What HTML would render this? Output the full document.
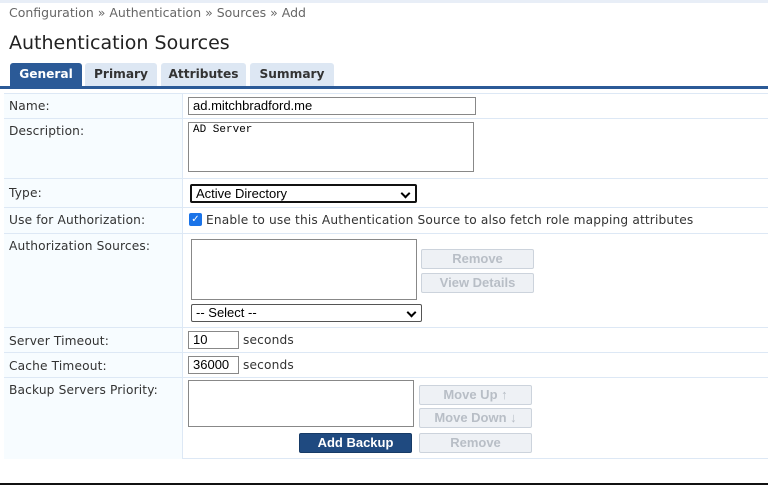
<!DOCTYPE html>
<html><head><style>
*{box-sizing:border-box;margin:0;padding:0}
body{width:768px;height:485px;background:#fff;font-family:"DejaVu Sans",Verdana,sans-serif;position:relative;overflow:hidden;color:#333}
.a{position:absolute}
.top{left:0;top:0;width:768px;height:3px;background:#e8eef7}
.bc{left:9px;top:5px;font-size:12.5px;color:#666}
h1{position:absolute;left:9px;top:32px;font-size:19px;font-weight:normal;color:#222}
.tab{position:absolute;top:63px;height:24px;background:#dde7f3;font-size:12.2px;font-weight:bold;color:#333;text-align:center;line-height:23px;border-radius:3px 3px 0 0}
.bar{left:0;top:86px;width:768px;height:3px;background:#2b5a97}
.row{position:absolute;left:4px;width:764px;border-top:1px solid #dde8f5}
.lab{position:absolute;left:4px;width:179px;background:#f7fcff;border-right:1px solid #dde8f5;font-size:12.2px;letter-spacing:0.15px;color:#333;padding:5px 0 0 5px;border-top:1px solid #dde8f5}
.frame{left:4px;top:93px;width:764px;height:366px;border:1px solid #dde8f5;border-right:none}
.inp{position:absolute;background:#fff;border:1px solid #888;font-size:13px;font-family:"Liberation Sans",Arial,sans-serif;color:#000;padding:1px 4px}
.sel{position:absolute;background:#fff;border:1px solid #555;border-radius:2px;font-size:13px;font-family:"Liberation Sans",Arial,sans-serif;color:#000;padding:0 4px}
.sel:after{content:"";position:absolute;right:6px;top:4px;width:5px;height:5px;border-right:2px solid #000;border-bottom:2px solid #000;transform:rotate(45deg)}
.btn{position:absolute;background:#eef1f5;border:1px solid #ccd3dc;border-radius:2px;font-family:"Liberation Sans",Arial,sans-serif;font-weight:bold;font-size:13px;color:#b8bec6;text-align:center;line-height:17px}
.t{position:absolute;font-size:12.2px;letter-spacing:0.15px;color:#333}
</style></head><body>
<div class="a top"></div>
<div class="a bc">Configuration » Authentication » Sources » Add</div>
<h1>Authentication Sources</h1>
<div class="tab" style="left:10px;width:72px;background:#2b5a97;color:#fff">General</div>
<div class="tab" style="left:85px;width:72px">Primary</div>
<div class="tab" style="left:161px;width:85px">Attributes</div>
<div class="tab" style="left:250px;width:84px">Summary</div>
<div class="a bar"></div>
<div class="a frame"></div>
<div class="lab" style="top:93px;height:25px">Name:</div>
<div class="lab" style="top:118px;height:60px">Description:</div>
<div class="lab" style="top:178px;height:29px;padding-top:7px">Type:</div>
<div class="lab" style="top:207px;height:26px">Use for Authorization:</div>
<div class="lab" style="top:233px;height:94px">Authorization Sources:</div>
<div class="lab" style="top:327px;height:25px;padding-top:6px">Server Timeout:</div>
<div class="lab" style="top:352px;height:25px;padding-top:6px">Cache Timeout:</div>
<div class="lab" style="top:377px;height:82px">Backup Servers Priority:</div>
<div class="row" style="top:118px"></div><div class="row" style="top:178px"></div><div class="row" style="top:207px"></div><div class="row" style="top:233px"></div><div class="row" style="top:327px"></div><div class="row" style="top:352px"></div><div class="row" style="top:377px"></div>
<div class="inp" style="left:188px;top:97px;width:288px;height:18px;padding-top:0">ad.mitchbradford.me</div>
<div class="inp" style="left:188px;top:122px;width:286px;height:50px;font-family:'Liberation Mono',monospace;font-size:11px">AD Server</div>
<div class="sel" style="left:190px;top:184px;width:227px;height:19px;border:2px solid #111">Active Directory</div>
<div class="a" style="left:189px;top:213px;width:13px;height:13px;background:#1a73e8;border-radius:2px;color:#fff;font-size:10px;line-height:13px;text-align:center">✓</div>
<div class="t" style="left:206px;top:213px">Enable to use this Authentication Source to also fetch role mapping attributes</div>
<div class="inp" style="left:191px;top:239px;width:226px;height:61px"></div>
<div class="btn" style="left:421px;top:249px;width:113px;height:20px">Remove</div>
<div class="btn" style="left:421px;top:273px;width:113px;height:20px">View Details</div>
<div class="sel" style="left:191px;top:304px;width:231px;height:18px">-- Select --</div>
<div class="inp" style="left:188px;top:331px;width:51px;height:18px;padding-top:0">10</div>
<div class="t" style="left:243px;top:333px">seconds</div>
<div class="inp" style="left:188px;top:356px;width:51px;height:18px;padding-top:0">36000</div>
<div class="t" style="left:243px;top:358px">seconds</div>
<div class="inp" style="left:188px;top:380px;width:226px;height:47px"></div>
<div class="btn" style="left:419px;top:385px;width:113px;height:20px">Move Up ↑</div>
<div class="btn" style="left:419px;top:408px;width:113px;height:20px">Move Down ↓</div>
<div class="btn" style="left:299px;top:433px;width:113px;height:20px;background:#1f4a80;border-color:#163a66;color:#fff">Add Backup</div>
<div class="btn" style="left:419px;top:433px;width:113px;height:20px">Remove</div>
<div class="a" style="left:0;top:483px;width:768px;height:2px;background:#111"></div>
</body></html>
